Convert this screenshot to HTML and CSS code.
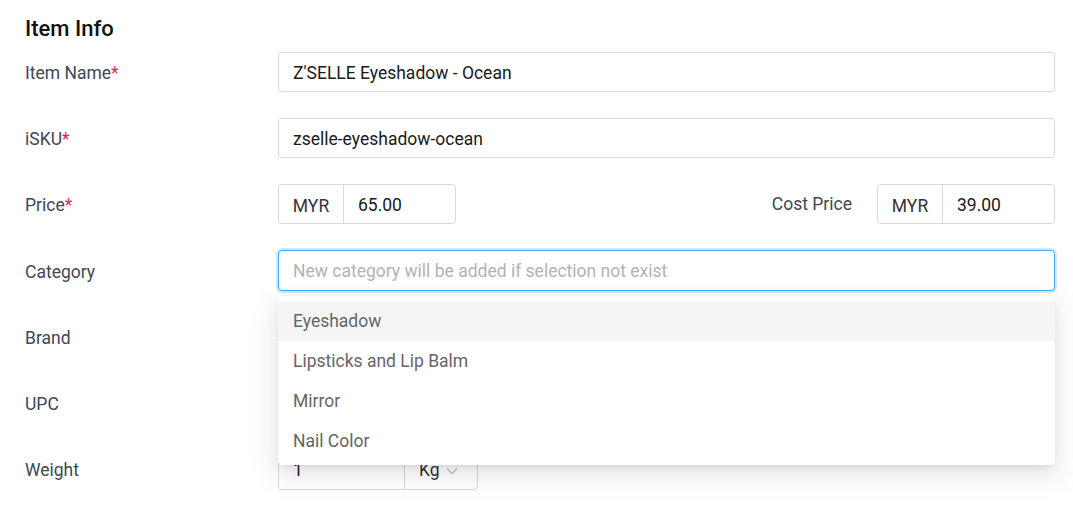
FILE: index.html
```html
<!DOCTYPE html>
<html>
<head>
<meta charset="utf-8">
<link rel="stylesheet" href="styles.css">
</head>
<body>
<div class="page">
  <h2 class="title">Item Info</h2>
  <div class="form">
    <div class="row">
      <div class="label">Item Name<span class="req">*</span></div>
      <div class="field"><div class="input">Z'SELLE Eyeshadow - Ocean</div></div>
    </div>
    <div class="row">
      <div class="label">iSKU<span class="req">*</span></div>
      <div class="field"><div class="input">zselle-eyeshadow-ocean</div></div>
    </div>
    <div class="row">
      <div class="label">Price<span class="req">*</span></div>
      <div class="field split">
        <div class="group">
          <span class="addon">MYR</span>
          <span class="gval">65.00</span>
        </div>
        <div class="cost">
          <span class="cost-label">Cost Price</span>
          <div class="group">
            <span class="addon">MYR</span>
            <span class="gval">39.00</span>
          </div>
        </div>
      </div>
    </div>
    <div class="row tall">
      <div class="label">Category</div>
      <div class="field anchor">
        <div class="input focus placeholder">New category will be added if selection not exist</div>
        <ul class="dropdown">
          <li class="active">Eyeshadow</li>
          <li>Lipsticks and Lip Balm</li>
          <li>Mirror</li>
          <li>Nail Color</li>
        </ul>
      </div>
    </div>
    <div class="row">
      <div class="label">Brand</div>
      <div class="field"><div class="input"></div></div>
    </div>
    <div class="row">
      <div class="label">UPC</div>
      <div class="field"><div class="input"></div></div>
    </div>
    <div class="row">
      <div class="label">Weight</div>
      <div class="field">
        <div class="wgroup">
          <span class="wval">1</span>
          <span class="wunit">Kg
            <svg class="chev" width="12" height="12" viewBox="0 0 12 12"><path d="M1 3.5 L6 8.5 L11 3.5" fill="none" stroke="#bfbfbf" stroke-width="1.2"/></svg>
          </span>
        </div>
      </div>
    </div>
  </div>
</div>
</body>
</html>
```
FILE: styles.css
```css
* { box-sizing: border-box; }
html, body { margin: 0; padding: 0; background: #fff; }
body {
  font-family: Roboto, "Liberation Sans", sans-serif;
  font-size: 17.5px;
  color: #222;
  overflow: hidden;
  height: 506px;
}
.page {
  padding: 16px 18px 0 25px;
}
.title {
  margin: 0 0 10px 0;
  font-size: 22px;
  font-weight: 500;
  line-height: 26px;
  color: #111;
}
.form {
  display: flex;
  flex-direction: column;
  gap: 26px;
}
.row {
  display: grid;
  grid-template-columns: 253px 1fr;
  align-items: center;
  height: 40px;
}
.row.tall { height: 41px; }
.label {
  color: #414753;
  padding-top: 2px;
}
.req { color: #e0244a; }
.field { height: 40px; }
.row.tall .field { height: 41px; }
.anchor { position: relative; }
.input {
  height: 40px;
  border: 1px solid #d9d9d9;
  border-radius: 4px;
  padding: 1px 14px 0;
  display: flex;
  align-items: center;
  color: #1a1a1a;
  background: #fff;
}
.input.focus {
  border-color: #40a9ff;
  box-shadow: 0 0 0 2px rgba(24, 144, 255, 0.2);
  height: 41px;
}
.placeholder { color: #b3b3b3; }
.split {
  display: flex;
  justify-content: space-between;
  align-items: center;
}
.group {
  display: flex;
  height: 40px;
  width: 178px;
  border: 1px solid #d9d9d9;
  border-radius: 4px;
}
.addon {
  width: 65px;
  border-right: 1px solid #d9d9d9;
  display: flex;
  align-items: center;
  justify-content: center;
  color: #333;
  padding-top: 3px;
}
.gval {
  display: flex;
  align-items: center;
  padding: 1px 0 0 14px;
  color: #1a1a1a;
}
.cost {
  display: flex;
  align-items: center;
  gap: 25px;
}
.cost-label { color: #414753; }
.dropdown {
  position: absolute;
  top: 46px;
  left: 0;
  right: 0;
  margin: 0;
  padding: 5px 0 4px;
  list-style: none;
  background: #fff;
  border-radius: 4px;
  box-shadow: 0 3px 6px -4px rgba(0, 0, 0, 0.12), 0 6px 16px 0 rgba(0, 0, 0, 0.08), 0 9px 28px 8px rgba(0, 0, 0, 0.05);
  z-index: 5;
}
.dropdown li {
  height: 40px;
  line-height: 40px;
  padding: 0 15px;
  color: #666;
}
.dropdown li.active { background: #f5f5f5; }
.wgroup {
  display: flex;
  height: 40px;
  width: 200px;
  border: 1px solid #d9d9d9;
  border-radius: 4px;
  margin-top: 1px;
}
.wval {
  width: 126px;
  border-right: 1px solid #d9d9d9;
  display: flex;
  align-items: center;
  padding-left: 14px;
}
.wunit {
  display: flex;
  align-items: center;
  padding-left: 14px;
  gap: 6px;
  color: #333;
}
.chev { margin-top: 1px; }
```
